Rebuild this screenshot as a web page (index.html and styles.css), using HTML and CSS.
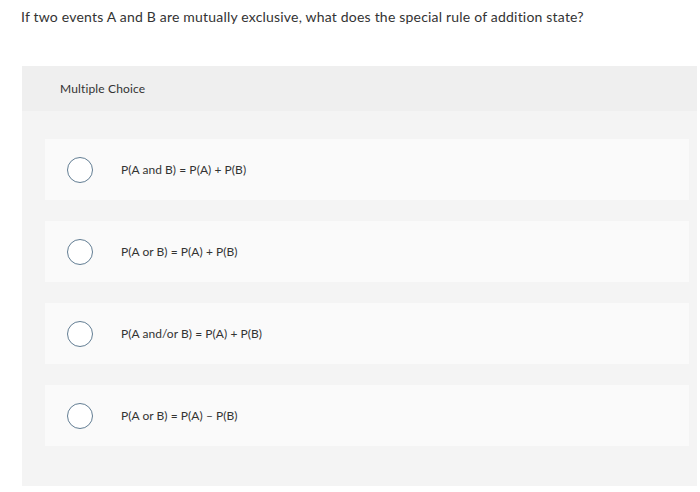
FILE: index.html
```html
<!DOCTYPE html>
<html>
<head>
<meta charset="utf-8">
<link rel="stylesheet" href="styles.css">
</head>
<body>
<p class="question">If two events A and B are mutually exclusive, what does the special rule of addition state?</p>
<section class="panel">
  <header class="panel-head">Multiple Choice</header>
  <div class="options">
    <label class="option"><span class="radio"></span><span class="opt-text">P(A and B) = P(A) + P(B)</span></label>
    <label class="option"><span class="radio"></span><span class="opt-text">P(A or B) = P(A) + P(B)</span></label>
    <label class="option"><span class="radio"></span><span class="opt-text">P(A and/or B) = P(A) + P(B)</span></label>
    <label class="option"><span class="radio"></span><span class="opt-text">P(A or B) = P(A) – P(B)</span></label>
  </div>
</section>
</body>
</html>
```
FILE: styles.css
```css
html, body {
  margin: 0;
  padding: 0;
  background: #ffffff;
}
body {
  font-family: Lato, "Noto Sans", sans-serif;
  color: #333333;
}
.question {
  margin: 0;
  padding: 8px 0 0 21px;
  font-size: 14px;
  letter-spacing: 0.2px;
  line-height: 18px;
  height: 66px;
  box-sizing: border-box;
}
.panel {
  margin-left: 22px;
  width: 675px;
  background: #f4f4f4;
}
.panel-head {
  height: 45px;
  background: #efefef;
  display: flex;
  align-items: center;
  padding-left: 38px;
  font-size: 12px;
  letter-spacing: 0.15px;
  color: #333333;
}
.options {
  display: flex;
  flex-direction: column;
  gap: 21px;
  padding: 28px 8px 40px 23px;
}
.option {
  height: 61px;
  background: #fafafa;
  display: flex;
  align-items: center;
  padding-left: 22px;
}
.radio {
  width: 26px;
  height: 26px;
  box-sizing: border-box;
  border: 1.5px solid #627d93;
  border-radius: 50%;
  background: #ffffff;
  flex: none;
}
.opt-text {
  margin-left: 28px;
  font-size: 12px;
  letter-spacing: 0.05px;
  color: #333333;
}
```
